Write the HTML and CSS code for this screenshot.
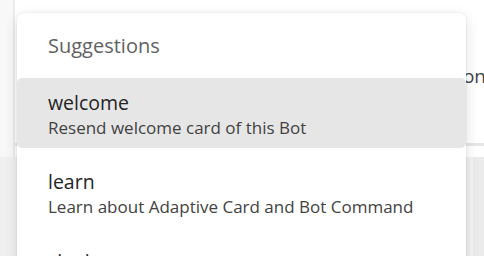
FILE: index.html
```html
<!DOCTYPE html>
<html lang="en">
<head>
<meta charset="utf-8">
<title>Suggestions</title>
<link rel="stylesheet" href="styles.css">
</head>
<body>
<div class="page">
  <div class="upper">
    <div class="rail"></div>
    <div class="content">
      <div class="behind-text">Bot Command action</div>
      <div class="divider"></div>
    </div>
  </div>
  <div class="lower">
    <div class="lower-main"></div>
    <div class="lower-edge"></div>
  </div>
</div>

<div class="popup">
  <div class="popup-header">Suggestions</div>
  <ul class="list">
    <li class="item active">
      <div class="item-inner">
        <div class="item-title">welcome</div>
        <div class="item-desc">Resend welcome card of this Bot</div>
      </div>
    </li>
    <li class="item">
      <div class="item-inner">
        <div class="item-title">learn</div>
        <div class="item-desc">Learn about Adaptive Card and Bot Command</div>
      </div>
    </li>
    <li class="item">
      <div class="item-inner">
        <div class="item-title">signin</div>
        <div class="item-desc">Sign in to your account</div>
      </div>
    </li>
  </ul>
</div>
</body>
</html>
```

FILE: styles.css
```css
* { box-sizing: border-box; }
html, body { margin: 0; padding: 0; }
body {
  width: 484px;
  height: 256px;
  overflow: hidden;
  position: relative;
  background: #ffffff;
  font-family: "Open Sans", "Noto Sans", sans-serif;
}
.page {
  display: flex;
  flex-direction: column;
  height: 256px;
}
.upper {
  display: flex;
  height: 157px;
}
.rail {
  width: 15px;
  background: #f8f8f8;
  border-right: 2px solid #ececec;
}
.content {
  flex: 1;
  display: flex;
  flex-direction: column;
  background: #ffffff;
}
.behind-text {
  margin-top: 63px;
  text-align: right;
  margin-right: -2px;
  font-size: 19px;
  line-height: 26px;
  color: #424242;
  white-space: nowrap;
}
.divider {
  margin-top: 54px;
  height: 3px;
  background: #e6e6e6;
}
.lower {
  flex: 1;
  display: flex;
  background: #f0f0f0;
}
.lower-main { flex: 1; }
.lower-edge {
  width: 14px;
  background: #ebebeb;
  border-left: 3px solid #f4f4f4;
}

.popup {
  position: absolute;
  left: 17px;
  top: 13px;
  width: 449px;
  height: 270px;
  background: #ffffff;
  border-radius: 6px;
  box-shadow: 0 0 2px rgba(0,0,0,0.12), 0 4px 14px rgba(0,0,0,0.12);
  overflow: hidden;
}
.popup-header {
  height: 61px;
  padding: 20px 0 0 31px;
  font-size: 20px;
  line-height: 26px;
  color: #616161;
}
.list {
  list-style: none;
  margin: 0;
  padding: 0;
}
.item {
  height: 79px;
  padding: 4px 0 5px;
}
.item-inner {
  height: 70px;
  border-radius: 5px;
  padding: 12px 0 0 31px;
}
.item.active .item-inner {
  background: #e6e6e6;
}
.item-title {
  font-size: 19.5px;
  line-height: 26px;
  color: #242424;
}
.item-desc {
  font-size: 17px;
  line-height: 23px;
  color: #424242;
}
```
